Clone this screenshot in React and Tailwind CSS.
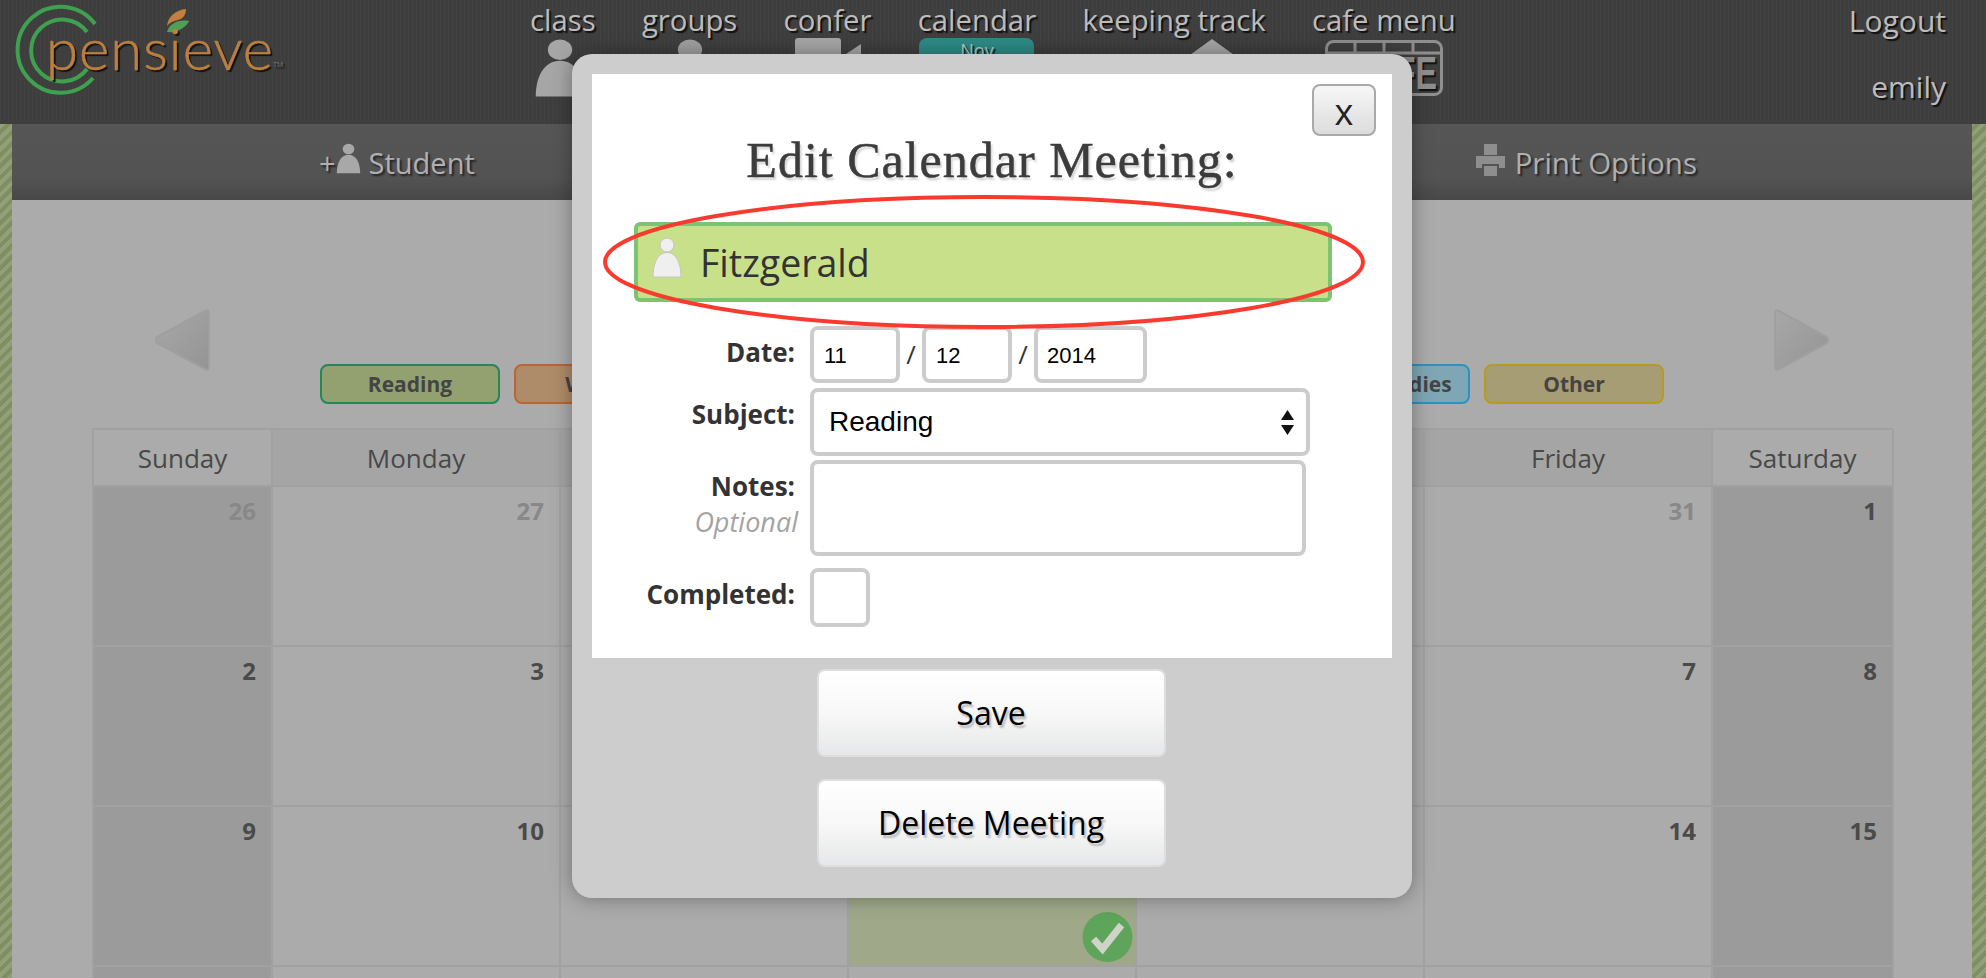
const OPEN = "font-['Open_Sans',sans-serif]";

const navItems = [
  { label: 'class', icon: <PersonIcon className="w-[52px] h-[60px] mr-[6px]" fill="#a6a6a6" /> },
  { label: 'groups', icon: <PersonIcon className="w-[52px] h-[60px]" fill="#a0a0a0" /> },
  { label: 'confer', icon: <CameraIcon /> },
  {
    label: 'calendar',
    icon: (
      <div className={`w-[115px] h-[60px] rounded-lg bg-[#2f8a86] text-center text-[18px] leading-[24px] text-[#a9c9c6] ${OPEN}`}>Nov</div>
    ),
  },
  { label: 'keeping track', icon: <ChartIcon /> },
  { label: 'cafe menu', icon: <MenuIcon /> },
];

const legend = [
  { name: 'Reading', cls: 'bg-[#93a170] border-[#23875a]' },
  { name: 'Writing', cls: 'bg-[#ae8c69] border-[#bd6433]' },
  { name: 'Word Study', cls: 'bg-[#a08ea8] border-[#7a5c9a]' },
  { name: 'Math', cls: 'bg-[#a88a8a] border-[#b04a4a]' },
  { name: 'Science', cls: 'bg-[#8aa89a] border-[#3a9a7a]' },
  { name: 'Social Studies', cls: 'bg-[#7fa6b5] border-[#2b93c0]' },
  { name: 'Other', cls: 'bg-[#a69d74] border-[#b89a1e]' },
];

const days = ['Sunday', 'Monday', 'Tuesday', 'Wednesday', 'Thursday', 'Friday', 'Saturday'];

// last row only shows its top edge in the window, so no numbers there
const weeks = [
  [26, 27, 28, 29, 30, 31, 1],
  [2, 3, 4, 5, 6, 7, 8],
  [9, 10, 11, 12, 13, 14, 15],
  [null, null, null, null, null, null, null],
];

function PersonIcon({ className, fill = '#a6a6a6', stroke = 'none' }) {
  return (
    <svg viewBox="0 0 30 41" className={className} preserveAspectRatio="none">
      <circle cx="15" cy="8" r="7" fill={fill} stroke={stroke} />
      <path d="M1 40 C1 26 6 15.5 15 15.5 C24 15.5 29 26 29 40 Z" fill={fill} stroke={stroke} />
    </svg>
  );
}

function CameraIcon() {
  return (
    <svg viewBox="0 0 66 40" className="w-[66px] h-[40px]">
      <rect x="0" y="0" width="46" height="40" rx="3" fill="#a6a6a6" />
      <path d="M48 18 L66 6 V34 L48 24 Z" fill="#a6a6a6" />
    </svg>
  );
}

function ChartIcon() {
  return (
    <svg viewBox="0 0 80 60" className="w-[80px] h-[60px] ml-[76px]">
      <path d="M40 1 L80 30 V60 H0 V30 Z" fill="#a6a6a6" />
    </svg>
  );
}

function MenuIcon() {
  return (
    <svg viewBox="0 0 118 56" className="w-[118px] h-[56px] mt-[2px]">
      <rect x="1.5" y="1.5" width="115" height="53" rx="7" fill="none" stroke="#8f8f8f" strokeWidth="3" />
      <path d="M1.5 13 H116.5 M30 1.5 V13 M59 1.5 V13 M88 1.5 V13" stroke="#8f8f8f" strokeWidth="3" fill="none" />
      <text x="160" y="49" textAnchor="end" transform="scale(0.7 1)" fontFamily="Liberation Sans" fontWeight="700" fontSize="46" fill="#8f8f8f">CAFE</text>
    </svg>
  );
}

function Logo() {
  return (
    <div className="relative w-[530px] h-[124px] shrink-0">
      <svg viewBox="0 0 300 100" className="absolute left-0 top-0 w-[300px] h-[100px]">
        <path d="M95 24 A43 43 0 1 0 93 78" fill="none" stroke="#3fa04f" strokeWidth="4" />
        <path d="M87 32 A31 31 0 1 0 87 69" fill="none" stroke="#3fa04f" strokeWidth="4" />
        <path d="M167 26 C168 16 176 10 186 9 C186 16 182 19 178 20 C173 21 169 23 167 26 Z" fill="#c47f3d" />
        <path d="M167 32 C169 24 178 19 189 21 C186 28 176 33 167 32 Z" fill="#4f9f56" />
      </svg>
      <span className="absolute left-[46px] top-[13px] text-[58px] leading-[70px] font-light tracking-[1px] text-[#bd7f3f] [-webkit-text-stroke:0.6px_#bd7f3f] font-['Lato',sans-serif]">pensieve</span>
      <span className={`absolute left-[273px] top-[60px] text-[7px] leading-[10px] text-[#77756f] ${OPEN}`}>TM</span>
    </div>
  );
}

function Header() {
  return (
    <header className={`flex h-[124px] bg-[#3e3e3e] bg-[repeating-linear-gradient(90deg,rgba(255,255,255,0.015)_0_1px,transparent_1px_4px)] text-[#bcbcbc] leading-[40px] [text-shadow:2px_2px_1px_#111] ${OPEN}`}>
      <Logo />
      <nav className="flex gap-[46.3px] text-[29.3px]">
        {navItems.map((item) => (
          <div key={item.label} className="flex flex-col items-center">
            <span className="whitespace-nowrap">{item.label}</span>
            <div className="-mt-[2px]">{item.icon}</div>
          </div>
        ))}
      </nav>
      <div className="ml-auto mr-[40px] pt-px flex flex-col items-end gap-[26px] text-[30px]">
        <span>Logout</span>
        <span>emily</span>
      </div>
    </header>
  );
}

function Toolbar() {
  return (
    <div className={`flex items-center h-[76px] pt-[2px] pl-[307px] pr-[275px] bg-[linear-gradient(#565656,#535353_70%,#484848)] text-[#b0b0b0] [text-shadow:2px_2px_2px_#222] ${OPEN}`}>
      <span className="flex items-center gap-[8px] text-[29px]">
        <span className="flex items-center">
          +<PersonIcon className="w-[25px] h-[31px] -mt-[10px]" fill="#a8a8a8" />
        </span>
        Student
      </span>
      <span className="ml-auto flex items-center gap-[10px] text-[29.5px]">
        <svg viewBox="0 0 29 32" className="w-[29px] h-[32px] -mt-[6px]">
          <path d="M8 0 H21 V11 H8 Z M0 12 H29 V24 H23 V20 H6 V24 H0 Z M8 22 H21 V32 H8 Z" fill="#8e8e8e" />
        </svg>
        Print Options
      </span>
    </div>
  );
}

function Arrow({ right }) {
  return (
    <svg viewBox="0 0 55 62" className="w-[55px] h-[62px] shrink-0">
      <defs>
        <linearGradient id={right ? 'ar' : 'al'} x1="0" y1="0" x2="1" y2="1">
          <stop offset="0" stopColor="#a8a8a8" />
          <stop offset="1" stopColor="#949494" />
        </linearGradient>
      </defs>
      <path
        d={right ? 'M1 4 Q1 0 5 2 L53 28 Q55 31 53 34 L5 60 Q1 62 1 58 Z' : 'M54 4 Q54 0 50 2 L2 28 Q0 31 2 34 L50 60 Q54 62 54 58 Z'}
        fill={`url(#${right ? 'ar' : 'al'})`}
        stroke="#9f9f9f"
        strokeWidth="2"
      />
    </svg>
  );
}

function Calendar() {
  return (
    <div className="ml-[80px] w-[1801px] grid grid-cols-[179px_288px_288px_288px_288px_288px_181px] grid-rows-[57px_160px_160px_160px_160px] border-t-2 border-l-2 border-[#a1a1a1]">
      {days.map((d, i) => (
        <div
          key={d}
          className={`flex items-center justify-center pt-px border-r-2 border-b-2 border-[#a1a1a1] text-[26px] text-[#484848] ${i === 0 || i === 6 ? 'bg-[#ababab]' : 'bg-[#a5a5a5]'}`}
        >
          {d}
        </div>
      ))}
      {weeks.map((week, w) =>
        week.map((n, i) => {
          const weekend = i === 0 || i === 6;
          const other = w === 0 && i < 6;
          const active = n === 12;
          return (
            <div
              key={`${w}-${i}`}
              className={`relative border-r-2 border-b-2 border-[#a1a1a1] pt-[6px] pr-[15px] text-right text-[24px] font-bold ${
                active ? 'bg-[#9fa98a]' : weekend ? 'bg-[#9b9b9b]' : 'bg-[#ababab]'
              } ${other ? 'text-[#888888]' : 'text-[#4a4a4a]'}`}
            >
              {n}
              {active && (
                <svg viewBox="0 0 50 50" className="absolute right-[2px] bottom-[3px] w-[51px] h-[50px]">
                  <circle cx="25" cy="25" r="25" fill="#5ea45a" />
                  <path d="M11 27 L20 37 L39 13" fill="none" stroke="#d0d3c8" strokeWidth="7" />
                </svg>
              )}
            </div>
          );
        })
      )}
    </div>
  );
}

function Field({ label, hint, className = '', children }) {
  return (
    <div className={`flex items-start gap-[15px] ${className}`}>
      <div className="w-[203px] shrink-0 pt-[8px] text-right text-[26px] leading-[36px] font-bold text-[#333]">
        {label}
        {hint && <div className="text-[27px] font-normal italic text-[#a3a3a3] -mr-[3px]">{hint}</div>}
      </div>
      {children}
    </div>
  );
}

function Modal() {
  const inputCls = "border-4 border-[#cccccc] rounded-lg bg-white outline-none text-black font-['Liberation_Sans',sans-serif]";
  return (
    <div className={`absolute left-[572px] top-[54px] w-[840px] h-[844px] bg-[#cdcdcd] rounded-[20px] pt-[20px] px-[20px] shadow-[0_0_20px_rgba(0,0,0,0.35)] flex flex-col items-center ${OPEN}`}>
      <div className="relative w-full h-[584px] bg-white flex flex-col">
        <button className="self-end mt-[10px] mr-[16px] w-[64px] h-[52px] rounded-lg border-2 border-[#a9a9a9] bg-gradient-to-b from-[#f7f7f7] to-[#dcdcdc] pt-[3px] text-[36px] leading-none text-[#222]">x</button>
        <h1 className="h-[86px] -mt-[5px] mb-[5px] text-center text-[50px] leading-[58px] text-[#3c3c3c] tracking-[1px] font-['Liberation_Serif',serif] [-webkit-text-stroke:0.5px_#3c3c3c] [text-shadow:2px_3px_2px_#d5d5d5]">Edit Calendar Meeting:</h1>
        <div className="ml-[42px] w-[698px] h-[80px] shrink-0 flex items-center border-4 border-[#7cc474] rounded-md bg-[#c9e08b]">
          <PersonIcon className="ml-[14px] -mt-[10px] w-[30px] h-[41px]" fill="#efefef" stroke="#c4c4bc" />
          <span className="ml-[18px] pt-[3px] text-[37.5px] text-[#333]">Fitzgerald</span>
        </div>
        <svg viewBox="0 0 762 134" className="absolute left-[11px] top-[121px] w-[762px] h-[134px] pointer-events-none">
          <ellipse cx="381" cy="67" rx="379" ry="65" fill="none" stroke="#fb3a2f" strokeWidth="4" />
        </svg>
        <Field label="Date:" className="mt-[24px]">
          <div className="flex items-center">
            <input readOnly value="11" className={`${inputCls} w-[90px] h-[57px] pl-[10px] pt-[3px] text-[22px]`} />
            <span className="w-[22px] text-center text-[26px] text-[#333]">/</span>
            <input readOnly value="12" className={`${inputCls} w-[90px] h-[57px] pl-[10px] pt-[3px] text-[22px]`} />
            <span className="w-[22px] text-center text-[26px] text-[#333]">/</span>
            <input readOnly value="2014" className={`${inputCls} w-[113px] h-[57px] pl-[9px] pt-[3px] text-[22px]`} />
          </div>
        </Field>
        <Field label="Subject:" className="mt-[5px]">
          <div className="relative">
            <select defaultValue="Reading" className={`${inputCls} appearance-none w-[500px] h-[68px] pl-[15px] text-[28px]`}>
              <option>Reading</option>
            </select>
            <svg viewBox="0 0 13 25" className="absolute right-[16px] top-[22px] w-[13px] h-[25px] pointer-events-none">
              <path d="M6.5 0 L13 10 H0 Z M0 15 H13 L6.5 25 Z" fill="#111" />
            </svg>
          </div>
        </Field>
        <Field label="Notes:" hint="Optional" className="mt-[4px]">
          <textarea readOnly className={`${inputCls} w-[496px] h-[96px] resize-none`} />
        </Field>
        <Field label="Completed:" className="mt-[12px]">
          <input type="checkbox" readOnly className="appearance-none w-[60px] h-[59px] border-4 border-[#cccccc] rounded-lg bg-white" />
        </Field>
      </div>
      <ActionButton className="mt-[11px]">Save</ActionButton>
      <ActionButton className="mt-[22px]">Delete Meeting</ActionButton>
    </div>
  );
}

function ActionButton({ className, children }) {
  return (
    <button className={`w-[349px] h-[88px] mr-[2px] rounded-lg border-2 border-[#dedede] bg-gradient-to-b from-white via-[#f8f8f8] to-[#e6e7e8] text-[32px] text-black [text-shadow:2px_3px_2px_#bbb] ${className}`}>
      {children}
    </button>
  );
}

export default function App() {
  return (
    <div className={`relative w-[1986px] h-[978px] overflow-hidden bg-[#ababab] ${OPEN}`}>
      <Header />
      <div className="h-[854px] pl-[12px] pr-[14px] bg-[repeating-linear-gradient(-45deg,#7f8f5f_0_4px,#939f78_4px_8px)]">
        <div className="h-full bg-[#ababab]">
          <Toolbar />
          <div className="h-[228px] flex justify-between px-[143px] pt-[109px]">
            <Arrow />
            <div className="flex gap-[14px] mt-[55px] h-[40px]">
              {legend.map((l) => (
                <div key={l.name} className={`w-[180px] h-[40px] flex items-center justify-center pt-px rounded-lg border-2 text-[21px] font-bold text-[#444] ${l.cls}`}>
                  {l.name}
                </div>
              ))}
            </div>
            <Arrow right />
          </div>
          <Calendar />
        </div>
      </div>
      <Modal />
    </div>
  );
}
